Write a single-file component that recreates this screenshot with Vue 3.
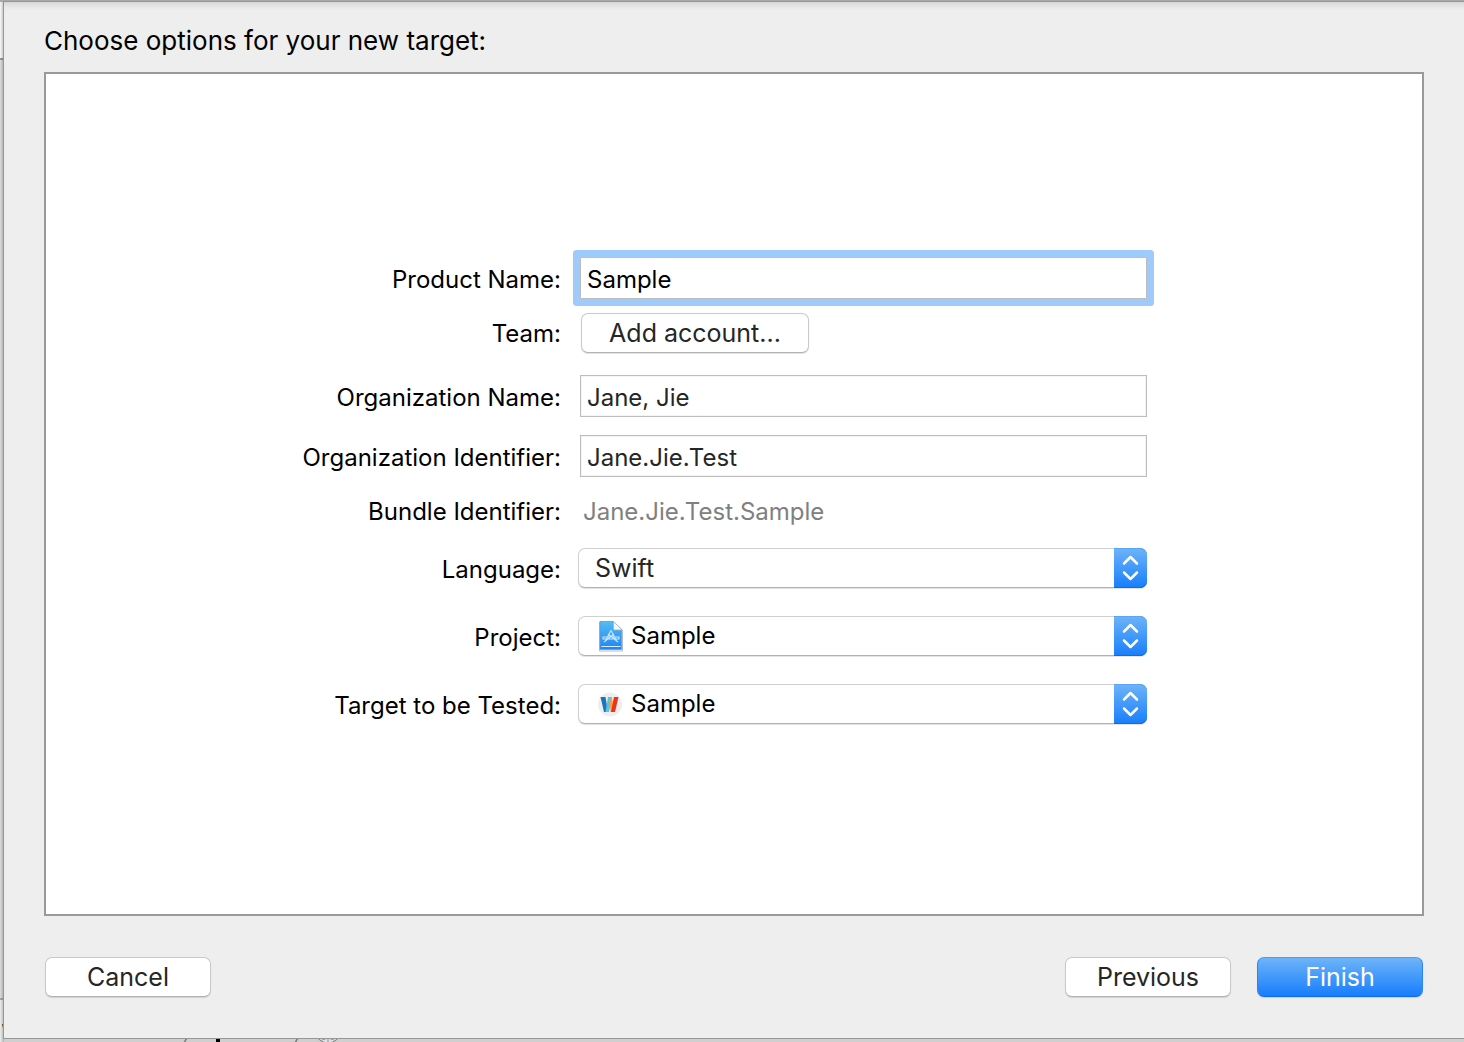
<script setup>
import { ref } from 'vue'

const productName = ref('Sample')
const organizationName = ref('Jane, Jie')
const organizationId = ref('Jane.Jie.Test')
const popups = ref([
  { id: 'language', label: 'Language:', value: 'Swift', icon: null },
  { id: 'project', label: 'Project:', value: 'Sample', icon: 'project' },
  { id: 'target', label: 'Target to be Tested:', value: 'Sample', icon: 'app' }
])
</script>

<template>
  <div class="window">
    <div class="behind-left" aria-hidden="true"></div>
    <svg class="behind-bottom" width="360" height="20" viewBox="0 0 360 20" aria-hidden="true">
      <path d="M2 2h2v4H3z" fill="#5a3c08" />
      <path d="M188 14L184 21M299 14L295 21" stroke="#777" stroke-width="1.5" />
      <path d="M216 17h4v4h-4z" fill="#000" />
      <circle cx="328" cy="8" r="13" fill="#e0e0e0" stroke="#777" stroke-width="1" />
      <path d="M328 14v7M322 18l6-2 6 2" stroke="#8a93b5" fill="none" />
    </svg>

    <form class="sheet" @submit.prevent>
      <h1>Choose options for your new target:</h1>

      <section class="panel">
        <div class="row">
          <label for="product">Product Name:</label>
          <input id="product" v-model="productName" class="focused" type="text" />
        </div>
        <div class="row team">
          <span class="label">Team:</span>
          <button type="button" class="push account">Add account...</button>
        </div>
        <div class="row organization">
          <label for="orgname">Organization Name:</label>
          <input id="orgname" v-model="organizationName" type="text" />
        </div>
        <div class="row identifier">
          <label for="orgid">Organization Identifier:</label>
          <input id="orgid" v-model="organizationId" type="text" />
        </div>
        <div class="row bundle">
          <span class="label">Bundle Identifier:</span>
          <output>{{ organizationId }}.{{ productName }}</output>
        </div>
        <div v-for="popup in popups" :key="popup.id" class="row popup-row">
          <label :for="popup.id">{{ popup.label }}</label>
          <div class="popup">
            <select :id="popup.id" v-model="popup.value" :class="{ 'with-icon': popup.icon }">
              <option>{{ popup.value }}</option>
            </select>
            <svg v-if="popup.icon === 'project'" class="item-icon" width="32" height="32" viewBox="0 0 32 32" aria-hidden="true">
              <defs>
                <linearGradient id="doc" x1="0" y1="0" x2="0" y2="1">
                  <stop offset="0" stop-color="#54bdf2" />
                  <stop offset="1" stop-color="#1f83f5" />
                </linearGradient>
              </defs>
              <path d="M4.500 2H19L27.500 10V31H4.500Z" fill="#fff" stroke="#b4bcc4" />
              <path d="M5 1.500H18.500V10H26.500V29.500H5Z" fill="url(#doc)" stroke="#5a9fd4" stroke-width=".8" />
              <path d="M18.500 1.500L27 10H18.500Z" fill="#f4f8fb" stroke="#9eb0bd" stroke-width=".7" />
              <path d="M6.500 26.500H25.500" fill="none" stroke="#d9efff" stroke-width="1" />
              <path d="M16 10.500L10 21.500M16 10.500L22 21.500M8 17H24V19H8ZM9 22L19 14M23 22L13 14" fill="none" stroke="#c9e8ff" stroke-width="1.100" />
            </svg>
            <svg v-if="popup.icon === 'app'" class="item-icon" width="32" height="32" viewBox="0 0 32 32" aria-hidden="true">
              <circle cx="15" cy="16.500" r="12" fill="#eeeeee" />
              <path d="M5.500 9H10.500L13 24H9Z" fill="#1b75bb" />
              <path d="M13 9H17L14 24H10.500Z" fill="#55c3e8" />
              <path d="M14.500 12L17 9L19 24H15.500Z" fill="#f6a13a" />
              <path d="M19 9H23.500L20 24H16Z" fill="#ea3323" />
            </svg>
            <svg class="stepper" width="33" height="40" viewBox="0 0 33 40" aria-hidden="true">
              <path d="M10 15.500L16.500 9L23 15.500M10 24.500L16.500 31L23 24.500" fill="none" stroke="#fff" stroke-width="2.500" stroke-linecap="round" stroke-linejoin="round" />
            </svg>
          </div>
        </div>
      </section>

      <footer>
        <button type="button" class="push">Cancel</button>
        <button type="button" class="push previous">Previous</button>
        <button type="submit" class="push primary">Finish</button>
      </footer>
    </form>
  </div>
</template>

<style>
body {
  margin: 0;
}
</style>

<style scoped>
.window,
.window * {
  box-sizing: border-box;
}

.window {
  position: relative;
  display: flex;
  min-height: 100vh;
  padding: 2px 0 4px 4px;
  background: linear-gradient(#a9a9a9 0 2px, transparent 2px), #cfcfcf;
  font-family: Inter, "Liberation Sans", sans-serif;
  font-size: 24px;
  line-height: 30px;
  color: #000;
  overflow: hidden;
}

.behind-left {
  position: absolute;
  inset: 2px auto 0 0;
  width: 4px;
  background:
    linear-gradient(90deg, transparent, rgba(0, 0, 0, 0.25)),
    linear-gradient(#fafafa 0 56px, #999 56px 58px, #dedede 58px calc(100% - 44px), #aaa calc(100% - 44px) calc(100% - 42px), #eee calc(100% - 42px));
}

.behind-bottom {
  position: absolute;
  left: 0;
  bottom: 0;
}

.sheet {
  position: relative;
  display: flex;
  flex: 1;
  flex-direction: column;
  margin: 0;
  padding: 24px 40px 41px;
  background: linear-gradient(#d6d6d6, #e5e5e5 4px, #eee 8px);
  box-shadow: 0 0 0 1px #979797;
}

h1 {
  margin: 0 0 16px;
  font-size: 26px;
  font-weight: 400;
  line-height: 30px;
}

.panel {
  display: flex;
  flex: 1;
  flex-direction: column;
  justify-content: center;
  padding-bottom: 7px;
  border: 2px solid #999;
  background: #fff;
}

.row {
  display: grid;
  grid-template-columns: 515fr 586fr 275fr;
  align-items: center;
}

label,
.label {
  padding-top: 2px;
  text-align: right;
  white-space: nowrap;
}

label {
  padding-top: 4px;
}

input {
  height: 42px;
  min-width: 0;
  margin-left: 19px;
  padding: 2px 6px 0;
  border: 1px solid #bdbdbd;
  border-radius: 0;
  outline: 0;
  background: #fff;
  box-shadow: inset 0 0 0 1px #f4f4f4;
  color: #262626;
  font: inherit;
}

.focused {
  color: #000;
  box-shadow: 0 0 0 7px #9fcbfa;
  border-radius: 1px;
}

.team {
  margin-top: 14px;
}

.organization {
  margin-top: 22px;
}

.identifier,
.bundle {
  margin-top: 18px;
}

output {
  padding-top: 2px;
  margin-left: 22px;
  color: #808080;
}

.popup-row {
  margin-top: 28px;
}

.bundle + .popup-row {
  margin-top: 21px;
}

.push {
  width: 166px;
  height: 40px;
  padding: 0;
  border: 1px solid #c9c9c9;
  border-bottom-color: #b2b2b2;
  border-radius: 7px;
  background: #fff;
  box-shadow: 0 1px 1px rgba(0, 0, 0, 0.12);
  color: #262626;
  font: inherit;
  font-size: 25px;
}

.account {
  width: 228px;
  margin-left: 20px;
}

.popup {
  position: relative;
  height: 40px;
  margin-left: 17px;
}

select {
  width: 100%;
  height: 40px;
  padding: 0 48px 0 16px;
  border: 1px solid #d0d0d0;
  border-bottom-color: #b2b2b2;
  border-radius: 7px;
  appearance: none;
  background: #fff;
  box-shadow: 0 1px 1px rgba(0, 0, 0, 0.12);
  color: #262626;
  font: inherit;
  font-size: 25px;
}

.with-icon {
  padding-left: 52px;
  color: #000;
  font-size: 24px;
}

.item-icon {
  position: absolute;
  top: 4px;
  left: 17px;
  pointer-events: none;
}

.stepper {
  position: absolute;
  top: 0;
  right: 0;
  border-radius: 0 7px 7px 0;
  background: linear-gradient(#6eb4f8, #177efc);
  box-shadow: inset 0 -1px #0f68f0, inset 0 1px #5aa6f3;
  pointer-events: none;
}

footer {
  display: flex;
  margin: 41px 1px 0;
}

.previous {
  margin-left: auto;
}

.primary {
  margin-left: 26px;
  border-color: #4a9df4 #2b85f5 #0f68f0;
  background: linear-gradient(#6eb4f8, #177efc);
  color: #fff;
}
</style>
